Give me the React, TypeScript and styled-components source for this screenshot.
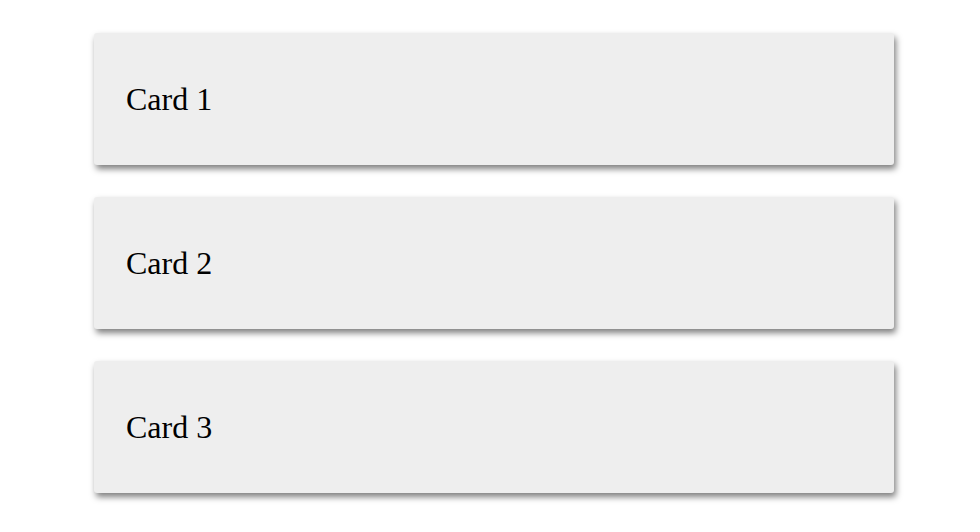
import React from "react";
import styled, { createGlobalStyle } from "styled-components";

const Global = createGlobalStyle`
  html, body { margin: 0; padding: 0; background: #ffffff; }
  body { font-family: "Liberation Serif", "Times New Roman", serif; }
`;

const Page = styled.div`
  display: flex;
  flex-direction: column;
  gap: 32px;
  padding: 33px 0 39px 94px;
  width: 800px;
`;

const Card = styled.div`
  display: flex;
  align-items: center;
  height: 132px;
  padding: 0 32px;
  box-sizing: border-box;
  background: #eeeeee;
  border-radius: 3px;
  box-shadow: 2px 4px 6px rgba(0, 0, 0, 0.5);
`;

const Title = styled.span`
  font-size: 32px;
  color: #000;
  line-height: 1;
`;

export default function App() {
  return (
    <>
      <Global />
      <Page>
        {["Card 1", "Card 2", "Card 3"].map((t) => (
          <Card key={t}>
            <Title>{t}</Title>
          </Card>
        ))}
      </Page>
    </>
  );
}
